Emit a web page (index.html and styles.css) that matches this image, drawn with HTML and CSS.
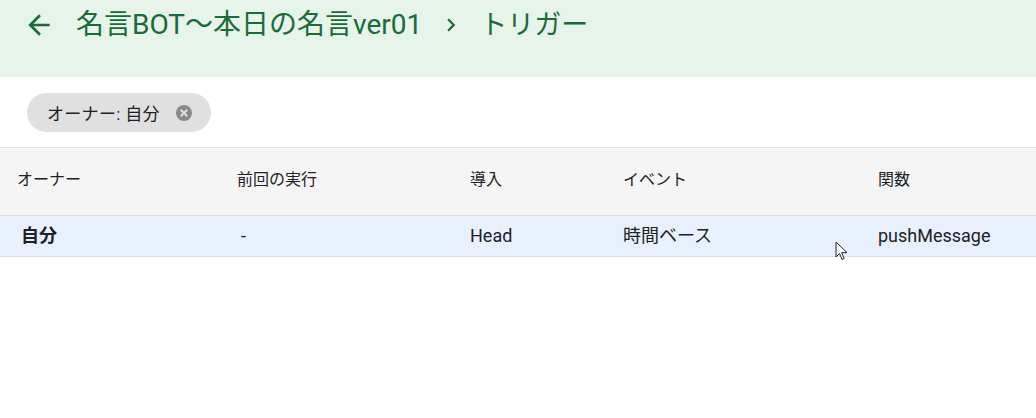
FILE: index.html
```html
<!DOCTYPE html>
<html lang="ja">
<head>
<meta charset="utf-8">
<link rel="stylesheet" href="styles.css">
</head>
<body>
<header class="topbar">
  <div class="crumbs">
    <svg class="back" width="32" height="32" viewBox="0 0 24 24"><path d="M20 11H7.83l5.59-5.59L12 4l-8 8 8 8 1.41-1.41L7.83 13H20v-2z" fill="#1a6b38"/></svg>
    <span class="title first">名言BOT～本日の名言ver01</span>
    <svg class="chev" width="26" height="26" viewBox="0 0 24 24"><path d="M10 6L8.59 7.41 13.17 12l-4.58 4.59L10 18l6-6z" fill="#1a6b38"/></svg>
    <span class="title last">トリガー</span>
  </div>
</header>
<section class="filters">
  <div class="chip">
    <span class="chip-label">オーナー: 自分</span>
    <svg class="chip-x" width="18" height="18" viewBox="0 0 18 18"><circle cx="9" cy="9" r="8" fill="#8a8a8a"/><path d="M5.8 5.8l6.4 6.4M12.2 5.8l-6.4 6.4" stroke="#e0e0e0" stroke-width="2"/></svg>
  </div>
</section>
<div class="table">
  <div class="row head">
    <div class="c c1">オーナー</div>
    <div class="c c2">前回の実行</div>
    <div class="c c3">導入</div>
    <div class="c c4">イベント</div>
    <div class="c c5">関数</div>
  </div>
  <div class="row data">
    <div class="c c1 owner">自分</div>
    <div class="c c2 dash">-</div>
    <div class="c c3">Head</div>
    <div class="c c4">時間ベース</div>
    <div class="c c5">pushMessage</div>
  </div>
</div>
<svg class="cursor" width="14" height="20" viewBox="0 0 14 20"><path d="M1 1v15l3.5-3.5 2.5 6 2.2-1-2.5-5.8H12z" fill="#fff" stroke="#222" stroke-width="1"/></svg>
</body>
</html>
```
FILE: styles.css
```css
html, body { margin: 0; padding: 0; background: #fff; }
body {
  font-family: Roboto, "Noto Sans CJK JP", sans-serif;
  color: #202124;
  width: 1036px;
  height: 418px;
  overflow: hidden;
  position: relative;
}
.topbar {
  height: 77px;
  background: #e6f4ea;
  color: #1a6b38;
}
.crumbs {
  height: 50px;
  display: flex;
  align-items: center;
  padding-left: 23px;
}
.title {
  font-size: 28px;
  line-height: 32px;
}
.title.first { margin-left: 21px; }
.chev { margin-left: 16px; }
.title.last { margin-left: 16px; font-size: 27px; }

.filters {
  height: 70px;
  display: flex;
  align-items: flex-start;
  padding: 16px 0 0 27px;
  box-sizing: border-box;
}
.chip {
  height: 39px;
  background: #e0e0e0;
  border-radius: 20px;
  display: flex;
  align-items: center;
  padding: 0 0 0 20px;
  box-sizing: border-box;
  width: 184px;
}
.chip-label { font-size: 17px; color: #202124; letter-spacing: 0.3px; }
.chip-x { margin-left: 15px; }

.table { border-top: 1px solid #e0e0e0; }
.row { display: flex; align-items: center; }
.row.head {
  height: 68px;
  background: #f5f5f5;
  border-bottom: 1px solid #dadce0;
  font-size: 16px;
  line-height: 20px;
  padding-bottom: 3px;
  box-sizing: border-box;
}
.row.data {
  height: 41px;
  background: #e8f0fe;
  border-bottom: 1px solid #dadce0;
  font-size: 18px;
  line-height: 22px;
  box-sizing: border-box;
}
.c { box-sizing: border-box; }
.c1 { width: 237px; padding-left: 17px; }
.c2 { width: 233px; }
.c3 { width: 153px; }
.c4 { width: 255px; }
.c5 { flex: 1; }
.owner { padding-left: 21px; font-weight: 700; }
.dash { padding-left: 4px; }
.cursor { position: absolute; left: 835px; top: 241px; }
```
